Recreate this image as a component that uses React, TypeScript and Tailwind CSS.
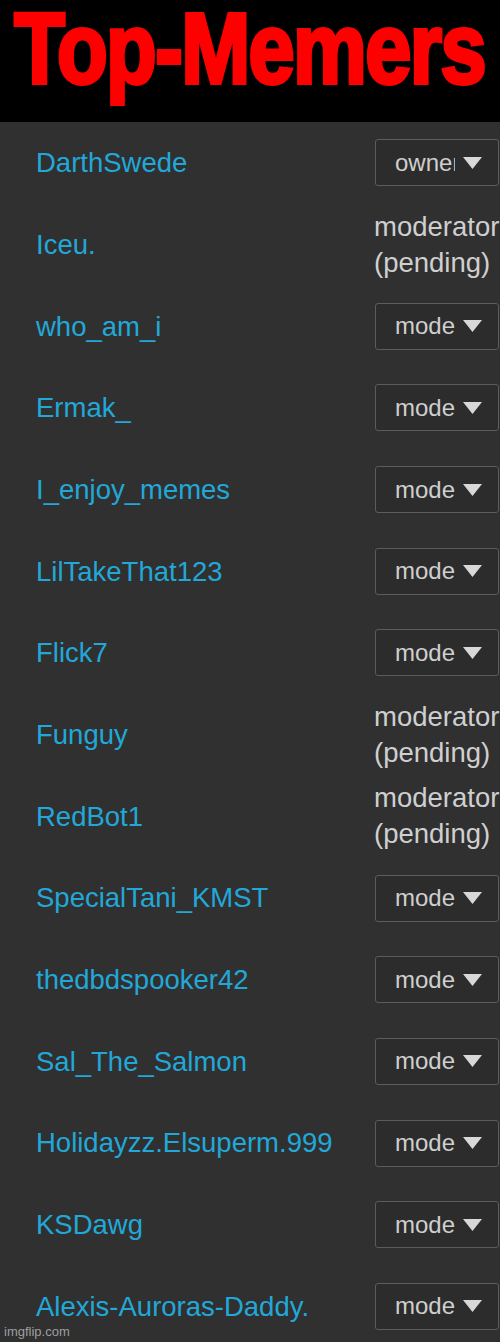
import React from 'react';

type Member = { name: string; role: 'owner' | 'mode' | 'pending' };

const members: Member[] = [
  { name: 'DarthSwede', role: 'owner' },
  { name: 'Iceu.', role: 'pending' },
  { name: 'who_am_i', role: 'mode' },
  { name: 'Ermak_', role: 'mode' },
  { name: 'I_enjoy_memes', role: 'mode' },
  { name: 'LilTakeThat123', role: 'mode' },
  { name: 'Flick7', role: 'mode' },
  { name: 'Funguy', role: 'pending' },
  { name: 'RedBot1', role: 'pending' },
  { name: 'SpecialTani_KMST', role: 'mode' },
  { name: 'thedbdspooker42', role: 'mode' },
  { name: 'Sal_The_Salmon', role: 'mode' },
  { name: 'Holidayzz.Elsuperm.999', role: 'mode' },
  { name: 'KSDawg', role: 'mode' },
  { name: 'Alexis-Auroras-Daddy.', role: 'mode' },
];

const RoleSelect: React.FC<{ label: string }> = ({ label }) => (
  <div className="flex h-[47px] w-[124px] items-center rounded-[3px] border border-[#5c5c5c] bg-[#2c2c2c] pl-[19px] text-[24px] text-[#cfcfcf]">
    <span className="w-[60px] overflow-hidden whitespace-nowrap">{label}</span>
    <svg width="19" height="12" viewBox="0 0 19 12" className="ml-[8px]">
      <path d="M0 0 H19 L9.5 12 Z" fill="#d8d8d8" />
    </svg>
  </div>
);

export default function App() {
  return (
    <div className="relative w-[500px] h-[1342px] overflow-hidden bg-[#303030] font-['Liberation_Sans',Arial,sans-serif]">
      <div className="flex h-[122px] items-start justify-center overflow-hidden bg-black">
        <h1 className="mt-[-13px] shrink-0 origin-center scale-x-[0.83] whitespace-nowrap font-['Liberation_Sans',Arial,sans-serif] text-[100px] font-bold leading-[122px] tracking-[-2px] text-[#ff0000] [-webkit-text-stroke:4px_#ff0000]">
          Top-Memers
        </h1>
      </div>

      <div className="flex flex-col">
        {members.map((m) => (
          <div key={m.name} className="flex h-[81.7px] shrink-0 items-center">
            <span className="w-[374px] shrink-0 pl-[36px] text-[27.5px] text-[#22a8d8] whitespace-nowrap">
              {m.name}
            </span>
            <div className="flex-1 overflow-hidden">
              {m.role === 'pending' ? (
                <div className="text-[27.5px] leading-[36px] text-[#cfcfcf] whitespace-nowrap">
                  moderator
                  <br />
                  (pending)
                </div>
              ) : (
                <div className="pl-[1px]">
                  <RoleSelect label={m.role === 'owner' ? 'owner' : 'mode'} />
                </div>
              )}
            </div>
          </div>
        ))}
      </div>

      <span className="absolute bottom-[1px] left-[4px] text-[13px] text-[#bdbdbd]/80">imgflip.com</span>
    </div>
  );
}
